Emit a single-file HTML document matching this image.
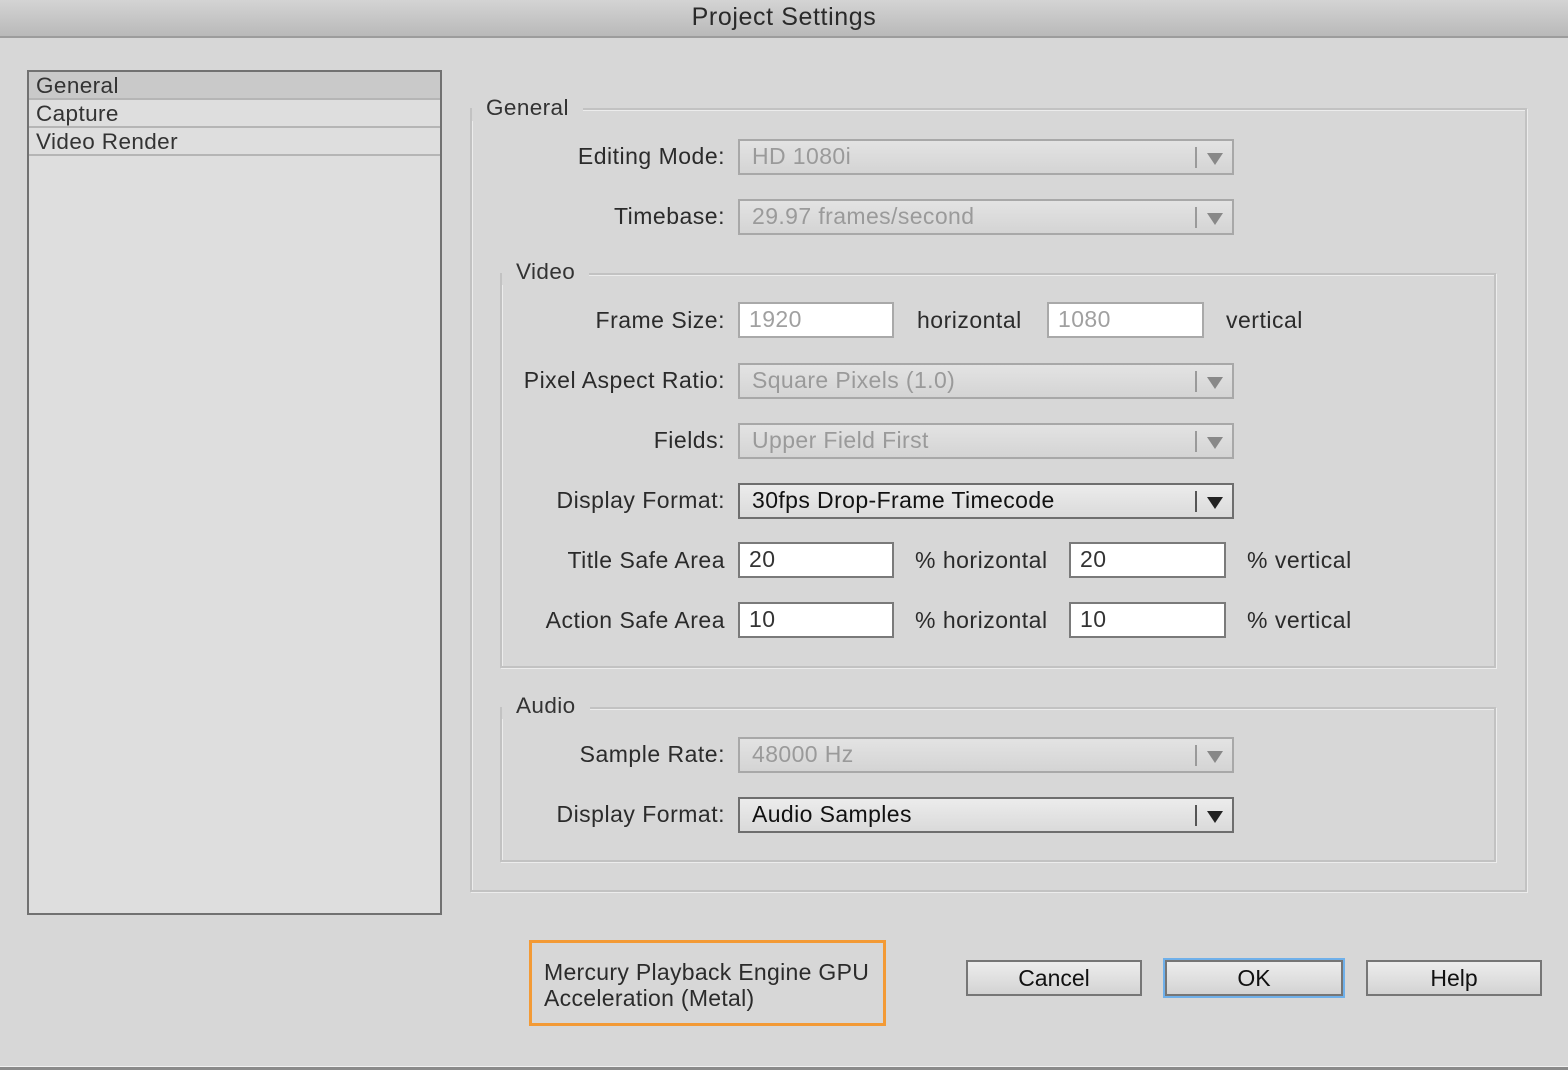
<!DOCTYPE html>
<html><head><meta charset="utf-8"><style>
*{box-sizing:border-box;margin:0;padding:0}
body{width:1568px;height:1070px;background:#d7d7d7;font-family:"Liberation Sans",sans-serif;color:#2b2b2b;position:relative;overflow:hidden}
.a{position:absolute}
.title{left:0;top:0;width:1568px;height:38px;background:linear-gradient(#d4d4d4,#b9b9b9);border-bottom:2px solid #9c9c9c;text-align:center;font-size:25px;letter-spacing:0.6px;line-height:35px;color:#2a2a2a}
.bottom{left:0;top:1066px;width:1568px;height:4px;background:#8a8a8a;border-top:1px solid #f0f0f0}
.list{left:27px;top:70px;width:415px;height:845px;background:#dedede;border:2px solid #717171}
.item{height:28px;font-size:22.5px;letter-spacing:0.4px;line-height:28px;padding-left:7px;border-bottom:2px solid #b5b5b5;color:#333}
.item.sel{background:#c9c9c9}
.grp{border:2px solid #c2c2c2;box-shadow:inset 1px 1px 0 #ececec,1px 1px 0 #ececec}
.gt{font-size:22.5px;letter-spacing:0.4px;background:#d7d7d7;padding:0 14px;line-height:26px;color:#333}
.lbl{font-size:23px;letter-spacing:0.5px;text-align:right;right:843px;line-height:26px;color:#2b2b2b;white-space:nowrap}
.dd{left:738px;width:496px;height:36px;border:2px solid #a8a8a8;background:linear-gradient(#e3e3e3,#d4d4d4);font-size:23px;letter-spacing:0.4px;line-height:31px;padding-left:12px;color:#9a9a9a}
.dd.en{border-color:#6e6e6e;color:#111;background:linear-gradient(#ececec,#dadada)}
.dd .sep{position:absolute;right:35px;top:6px;width:2px;height:21px;background:#9a9a9a}
.dd .ar{position:absolute;right:9px;top:12px;width:0;height:0;border-left:8px solid transparent;border-right:8px solid transparent;border-top:12px solid #888}
.dd.en .ar{border-top-color:#222}
.dd.en .sep{background:#555}
.tf{height:36px;border:2px solid #a9a9a9;background:#fff;font-size:23px;letter-spacing:0.4px;line-height:31px;padding-left:9px;color:#a0a0a0}
.tf.en{border-color:#7a7a7a;color:#333}
.txt{font-size:23px;letter-spacing:0.5px;line-height:26px;color:#2b2b2b;white-space:nowrap}
.btn{top:960px;height:36px;border:2px solid #767676;background:linear-gradient(#ededed,#d3d3d3);font-size:23px;text-align:center;line-height:32px;color:#111}
</style></head><body>
<div class="a title">Project Settings</div>
<div class="a list"><div class="item sel">General</div><div class="item">Capture</div><div class="item">Video Render</div></div>

<div class="a grp" style="left:470px;top:108px;width:1057px;height:784px"></div>
<div class="a gt" style="left:472px;top:95px">General</div>

<div class="a lbl" style="top:143px">Editing Mode:</div>
<div class="a dd" style="top:139px">HD 1080i<span class="sep"></span><span class="ar"></span></div>
<div class="a lbl" style="top:203px">Timebase:</div>
<div class="a dd" style="top:199px">29.97 frames/second<span class="sep"></span><span class="ar"></span></div>

<div class="a grp" style="left:500px;top:273px;width:996px;height:395px"></div>
<div class="a gt" style="left:502px;top:259px">Video</div>

<div class="a lbl" style="top:307px">Frame Size:</div>
<div class="a tf" style="left:738px;top:302px;width:156px">1920</div>
<div class="a txt" style="left:917px;top:307px">horizontal</div>
<div class="a tf" style="left:1047px;top:302px;width:157px">1080</div>
<div class="a txt" style="left:1226px;top:307px">vertical</div>

<div class="a lbl" style="top:367px">Pixel Aspect Ratio:</div>
<div class="a dd" style="top:363px">Square Pixels (1.0)<span class="sep"></span><span class="ar"></span></div>
<div class="a lbl" style="top:427px">Fields:</div>
<div class="a dd" style="top:423px">Upper Field First<span class="sep"></span><span class="ar"></span></div>
<div class="a lbl" style="top:487px">Display Format:</div>
<div class="a dd en" style="top:483px">30fps Drop-Frame Timecode<span class="sep"></span><span class="ar"></span></div>

<div class="a lbl" style="top:547px">Title Safe Area</div>
<div class="a tf en" style="left:738px;top:542px;width:156px">20</div>
<div class="a txt" style="left:915px;top:547px">% horizontal</div>
<div class="a tf en" style="left:1069px;top:542px;width:157px">20</div>
<div class="a txt" style="left:1247px;top:547px">% vertical</div>

<div class="a lbl" style="top:607px">Action Safe Area</div>
<div class="a tf en" style="left:738px;top:602px;width:156px">10</div>
<div class="a txt" style="left:915px;top:607px">% horizontal</div>
<div class="a tf en" style="left:1069px;top:602px;width:157px">10</div>
<div class="a txt" style="left:1247px;top:607px">% vertical</div>

<div class="a grp" style="left:500px;top:707px;width:996px;height:155px"></div>
<div class="a gt" style="left:502px;top:693px">Audio</div>
<div class="a lbl" style="top:741px">Sample Rate:</div>
<div class="a dd" style="top:737px">48000 Hz<span class="sep"></span><span class="ar"></span></div>
<div class="a lbl" style="top:801px">Display Format:</div>
<div class="a dd en" style="top:797px">Audio Samples<span class="sep"></span><span class="ar"></span></div>

<div class="a" style="left:529px;top:940px;width:357px;height:86px;border:3px solid #f39a35"></div>
<div class="a txt" style="left:544px;top:959px;line-height:26px;letter-spacing:0.3px">Mercury Playback Engine GPU<br>Acceleration (Metal)</div>

<div class="a btn" style="left:966px;width:176px">Cancel</div>
<div class="a btn" style="left:1165px;width:178px;box-shadow:0 0 0 2px #6fb0ea">OK</div>
<div class="a btn" style="left:1366px;width:176px">Help</div>
<div class="a bottom"></div>
</body></html>
